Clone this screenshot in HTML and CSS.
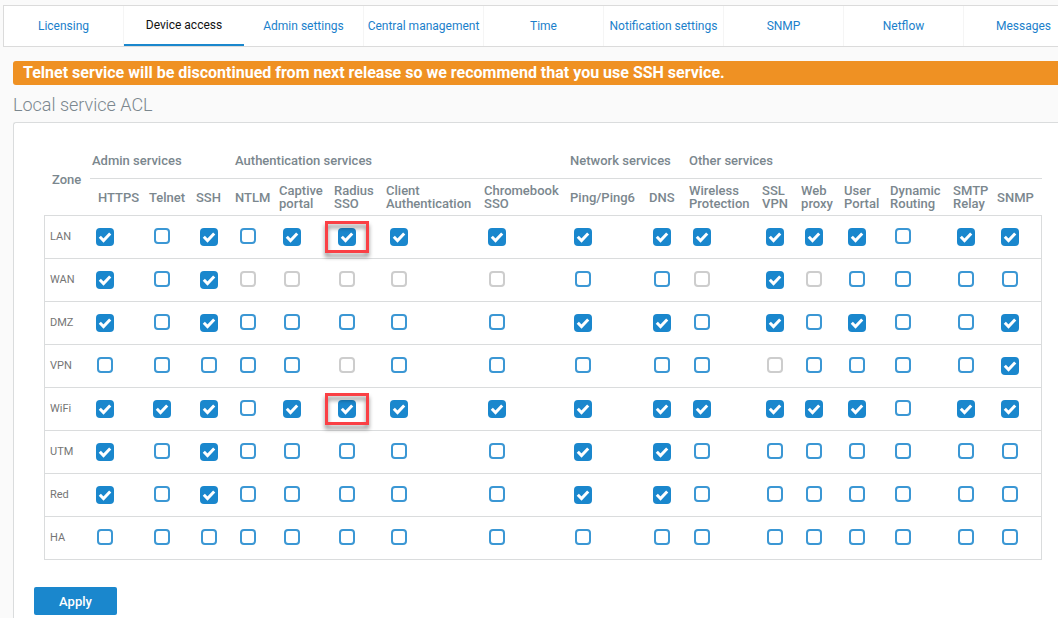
FILE: index.html
```html
<!DOCTYPE html>
<html lang="en">
<head>
    <meta charset="UTF-8">
    <meta name="viewport" content="width=device-width, initial-scale=1.0">
    <title>Device access</title>
    <link rel="stylesheet" href="styles.css">
</head>
<body>
    <nav class="tabs">
        <a href="#licensing">Licensing</a>
        <a href="#device-access" class="active" aria-current="page">Device access</a>
        <a href="#admin-settings">Admin settings</a>
        <a href="#central-management">Central management</a>
        <a href="#time">Time</a>
        <a href="#notification-settings">Notification settings</a>
        <a href="#snmp">SNMP</a>
        <a href="#netflow">Netflow</a>
        <a href="#messages">Messages</a>
    </nav>

    <main>
        <p class="banner">Telnet service will be discontinued from next release so we recommend that you use SSH service.</p>
        <h1>Local service ACL</h1>

        <form class="panel">
            <table class="acl">
                <colgroup>
                    <col class="w46"><col class="w57"><col class="w47"><col class="w39"><col class="w44"><col class="w55">
                    <col class="w52"><col class="w98"><col class="w86"><col class="w79"><col class="w40"><col class="w73">
                    <col class="w39"><col class="w43"><col class="w46"><col class="w63"><col class="w44"><col class="w47">
                </colgroup>
                <thead>
                    <tr class="groups">
                        <th rowspan="2" class="zone">Zone</th>
                        <th colspan="3">Admin services</th>
                        <th colspan="5">Authentication services</th>
                        <th colspan="2">Network services</th>
                        <th colspan="7">Other services</th>
                    </tr>
                    <tr class="services">
                        <th class="first">HTTPS</th>
                        <th>Telnet</th>
                        <th>SSH</th>
                        <th>NTLM</th>
                        <th>Captive<br>portal</th>
                        <th>Radius<br>SSO</th>
                        <th>Client<br>Authentication</th>
                        <th>Chromebook<br>SSO</th>
                        <th>Ping/Ping6</th>
                        <th>DNS</th>
                        <th>Wireless<br>Protection</th>
                        <th>SSL<br>VPN</th>
                        <th>Web<br>proxy</th>
                        <th>User<br>Portal</th>
                        <th>Dynamic<br>Routing</th>
                        <th>SMTP<br>Relay</th>
                        <th>SNMP</th>
                    </tr>
                </thead>
                <tbody id="zones"></tbody>
            </table>
            <button type="button" class="apply">Apply</button>
        </form>
    </main>

    <script>
        const services = ["HTTPS", "Telnet", "SSH", "NTLM", "Captive portal", "Radius SSO",
            "Client Authentication", "Chromebook SSO", "Ping/Ping6", "DNS", "Wireless Protection",
            "SSL VPN", "Web proxy", "User Portal", "Dynamic Routing", "SMTP Relay", "SNMP"];

        // 1 = allowed, 0 = not allowed, - = not available, * = allowed and marked
        const zones = {
            LAN:  "10101*11111111011",
            WAN:  "101-----00-1-0000",
            DMZ:  "10100000110101001",
            VPN:  "00000-00000-00001",
            WiFi: "11101*11111111011",
            UTM:  "10100000110000000",
            Red:  "10100000110000000",
            HA:   "00000000000000000"
        };

        const body = document.getElementById("zones");
        for (const zone in zones) {
            const row = body.insertRow();
            const name = document.createElement("th");
            name.scope = "row";
            name.textContent = zone;
            row.appendChild(name);

            services.forEach((service, i) => {
                const state = zones[zone][i];
                const cell = row.insertCell();
                const box = document.createElement("input");
                box.type = "checkbox";
                box.setAttribute("aria-label", zone + " " + service);
                box.checked = state === "1" || state === "*";
                box.disabled = state === "-";
                if (state === "*") cell.className = "marked";
                cell.appendChild(box);
            });
        }
    </script>
</body>
</html>
```
FILE: styles.css
```css
* {
    box-sizing: border-box;
}
body {
    display: flex;
    flex-direction: column;
    min-height: 100vh;
    margin: 0;
    padding-top: 5px;
    background-color: #fafafa;
    color: #7b878e;
    font-family: Roboto, Arial, sans-serif;
    font-size: 13px;
}
.tabs {
    display: flex;
    margin-left: 3px;
    height: 42px;
    background-color: #fff;
    border: 1px solid #dbdbdb;
    border-right: none;
    overflow: hidden;
}
.tabs a {
    flex: 0 0 120px;
    border-right: 1px solid #f5f5f5;
    color: #1b7fcb;
    font-size: 12px;
    line-height: 40px;
    text-align: center;
    text-decoration: none;
    white-space: nowrap;
}
.tabs a.active {
    border-right: none;
    border-bottom: 2px solid #1a87cd;
    color: #111;
    line-height: 38px;
}
main {
    display: flex;
    flex: 1;
    flex-direction: column;
    padding: 14px 0 0 13px;
}
.banner {
    margin: 0;
    padding-left: 10px;
    background-color: #ef9123;
    border-radius: 3px 0 0 3px;
    color: #fff;
    font-size: 16px;
    font-weight: 700;
    line-height: 24px;
}
h1 {
    margin: 8px 0 5px;
    font-size: 18px;
    font-weight: 300;
    line-height: 24px;
}
.panel {
    flex: 1;
    padding: 20px 16px 0 30px;
    background-color: #fff;
    border: 1px solid #dadcdd;
    border-width: 1px 0 0 1px;
    border-radius: 3px 0 0 0;
}
.acl {
    width: 100%;
    table-layout: fixed;
    border-collapse: separate;
    border-spacing: 0;
}
.w39 { width: 39px; }
.w40 { width: 40px; }
.w43 { width: 43px; }
.w44 { width: 44px; }
.w46 { width: 46px; }
.w47 { width: 47px; }
.w52 { width: 52px; }
.w55 { width: 55px; }
.w57 { width: 57px; }
.w63 { width: 63px; }
.w73 { width: 73px; }
.w79 { width: 79px; }
.w86 { width: 86px; }
.w98 { width: 98px; }
.acl thead th {
    padding: 0 0 0 2px;
    font-size: 13px;
    font-weight: 500;
    line-height: 13px;
    text-align: left;
    white-space: nowrap;
}
.acl .groups th {
    height: 36px;
    border-bottom: 1px solid #dadcdd;
}
.acl .services th {
    height: 36px;
}
.acl thead .first {
    padding-left: 8px;
}
.acl .groups .zone {
    padding-left: 8px;
    border-bottom: none;
}
.acl tbody th,
.acl tbody td {
    height: 43px;
    padding: 12px 0 0 7px;
    border-bottom: 1px solid #dadcdd;
    vertical-align: top;
}
.acl tbody th {
    padding: 0 0 2px 5px;
    border-left: 1px solid #dadcdd;
    color: #757575;
    font-size: 11px;
    font-weight: 400;
    text-align: left;
    vertical-align: middle;
}
.acl tbody tr:first-child th,
.acl tbody tr:first-child td {
    height: 44px;
    border-top: 1px solid #dadcdd;
}
.acl tbody td:last-child {
    border-right: 1px solid #dadcdd;
}
.acl input {
    display: block;
    width: 16px;
    height: 16px;
    margin: 0;
    appearance: none;
    background-color: #fff;
    border: 2px solid #3b97d4;
    border-radius: 4px;
}
.acl input:checked {
    width: 18px;
    height: 18px;
    margin-left: -1px;
    background: #1a87cd url("data:image/svg+xml,%3Csvg xmlns='http://www.w3.org/2000/svg' viewBox='0 0 18 18'%3E%3Cpath d='M3.8 8.8l3.7 3.7 6.7-7' fill='none' stroke='%23fff' stroke-width='3'/%3E%3C/svg%3E") center / 18px 18px no-repeat;
    border: none;
}
.acl input:disabled {
    border-color: #cdcdcd;
}
.acl .marked {
    position: relative;
}
.marked::after {
    content: "";
    position: absolute;
    top: 5px;
    left: -7px;
    box-sizing: border-box;
    width: 44px;
    height: 32px;
    border: 3px solid #fa4045;
    filter: drop-shadow(0 4px 2px rgba(0, 0, 0, 0.45));
    pointer-events: none;
}
.apply {
    display: block;
    width: 83px;
    height: 28px;
    margin: 27px 0 0 -10px;
    padding: 0;
    background-color: #1a87cd;
    border: none;
    border-radius: 2px;
    color: #fff;
    font-family: inherit;
    font-size: 13px;
    font-weight: 500;
    cursor: pointer;
}
```
